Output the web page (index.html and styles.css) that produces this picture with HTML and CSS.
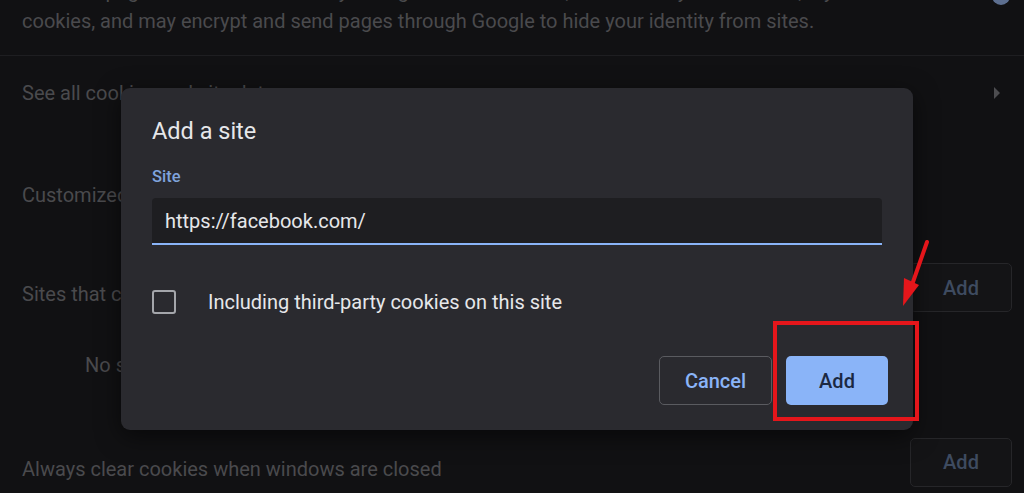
FILE: index.html
```html
<!DOCTYPE html>
<html lang="en">
<head>
<meta charset="utf-8">
<title>Add a site</title>
<link rel="stylesheet" href="styles.css">
</head>
<body>
<div class="screen">
  <div class="settings">
    <div class="row row-desc">
      <p class="desc">Preloads pages that Chrome thinks you might visit. To do this, Chrome may use cookies, if you allow<br>cookies, and may encrypt and send pages through Google to hide your identity from sites.</p>
      <span class="toggle-knob"></span>
    </div>
    <div class="row row-link">
      <span class="row-label">See all cookies and site data</span>
      <svg class="chev" width="10" height="14" viewBox="0 0 10 14"><path d="M2 1 L8 7 L2 13 Z" fill="#4d4d50"/></svg>
    </div>
    <div class="row row-head">
      <span class="row-label">Customized behaviors</span>
    </div>
    <div class="row row-btn">
      <span class="row-label">Sites that can always use cookies</span>
      <button class="ghost-btn">Add</button>
    </div>
    <div class="row row-empty">
      <span class="row-label">No sites added</span>
    </div>
    <div class="row row-btn row-last">
      <span class="row-label">Always clear cookies when windows are closed</span>
      <button class="ghost-btn">Add</button>
    </div>
  </div>

  <div class="dialog">
    <h2 class="dialog-title">Add a site</h2>
    <label class="field-label">Site</label>
    <div class="field">https://facebook.com/</div>
    <div class="check-row">
      <span class="checkbox"></span>
      <span class="check-label">Including third-party cookies on this site</span>
    </div>
    <div class="actions">
      <button class="btn-cancel">Cancel</button>
      <button class="btn-add">Add</button>
    </div>
  </div>

  <div class="highlight"></div>
  <svg class="arrow" width="40" height="80" viewBox="0 0 40 80">
    <line x1="32" y1="12" x2="18" y2="52" stroke="#e5161b" stroke-width="4" stroke-linecap="round"/>
    <polygon points="9,48 24,55 8,76" fill="#e5161b"/>
  </svg>
</div>
</body>
</html>
```

FILE: styles.css
```css
* { box-sizing: border-box; }
html, body {
  margin: 0;
  padding: 0;
  background: #111113;
}
body {
  font-family: Roboto, "Liberation Sans", Arial, sans-serif;
  width: 1024px;
  height: 493px;
  overflow: hidden;
}
.screen {
  position: relative;
  width: 1024px;
  height: 493px;
  overflow: hidden;
}
.settings {
  display: flex;
  flex-direction: column;
  color: #4a4a4d;
  font-size: 20px;
}
.row {
  display: flex;
  align-items: center;
  justify-content: space-between;
  padding: 0 12px 0 22px;
}
.row-desc {
  height: 56px;
  align-items: flex-start;
  border-bottom: 1px solid #1e1e21;
  padding-right: 14px;
  overflow: hidden;
}
.desc {
  margin: -24px 0 0 0;
  line-height: 30px;
  white-space: nowrap;
  color: #4a4a4d;
}
.toggle-knob {
  display: block;
  flex: none;
  width: 18px;
  height: 18px;
  border-radius: 50%;
  background: #5d6f90;
  margin-top: -13px;
  margin-right: 0;
}
.row-link {
  height: 74px;
  padding-right: 22px;
}
.chev { display: block; }
.row-head {
  height: 130px;
}
.row-btn {
  height: 68px;
}
.row-empty {
  height: 74px;
  padding-left: 85px;
}
.row-last {
  height: 130px;
  padding-top: 3px;
}
.ghost-btn {
  width: 102px;
  height: 49px;
  margin-bottom: 13px;
  background: #141416;
  border: 1px solid #262629;
  border-radius: 5px;
  color: #3e4b60;
  font-family: Roboto, "Liberation Sans", Arial, sans-serif;
  font-size: 20px;
  font-weight: 500;
}

.dialog {
  position: absolute;
  left: 121px;
  top: 88px;
  width: 792px;
  height: 342px;
  background: #2a2a2f;
  border-radius: 9px;
  box-shadow: 0 6px 24px rgba(0,0,0,0.55);
  padding: 27px 25px 25px 31px;
  display: flex;
  flex-direction: column;
}
.dialog-title {
  margin: 0;
  font-size: 23.5px;
  font-weight: 400;
  line-height: 32px;
  color: #e6e7ea;
}
.field-label {
  margin-top: 20px;
  font-size: 16.5px;
  font-weight: 500;
  line-height: 20px;
  color: #7fa3dc;
}
.field {
  margin-top: 11px;
  margin-right: 6px;
  height: 47px;
  background: #1e1e21;
  border-bottom: 2px solid #8ab4f8;
  border-radius: 4px 4px 0 0;
  padding: 0 13px;
  display: flex;
  align-items: center;
  font-size: 20px;
  color: #e6e7ea;
}
.check-row {
  margin-top: 45px;
  display: flex;
  align-items: center;
  height: 24px;
}
.checkbox {
  width: 24px;
  height: 24px;
  border: 2.5px solid #a4a6ab;
  border-radius: 3px;
  flex: none;
}
.check-label {
  margin-left: 32px;
  font-size: 20px;
  color: #e6e7ea;
}
.actions {
  margin-top: auto;
  display: flex;
  justify-content: flex-end;
  gap: 14px;
}
.btn-cancel, .btn-add {
  height: 49px;
  border-radius: 5px;
  font-family: Roboto, "Liberation Sans", Arial, sans-serif;
  font-size: 20px;
  font-weight: 500;
}
.btn-cancel {
  width: 113px;
  background: transparent;
  border: 1px solid #5a5b60;
  color: #8ab4f8;
}
.btn-add {
  width: 102px;
  background: #8ab4f8;
  border: none;
  color: #1b2842;
}

.highlight {
  position: absolute;
  left: 773px;
  top: 321px;
  width: 146px;
  height: 100px;
  border: 4px solid #e5161b;
}
.arrow {
  position: absolute;
  left: 895px;
  top: 230px;
}
```
